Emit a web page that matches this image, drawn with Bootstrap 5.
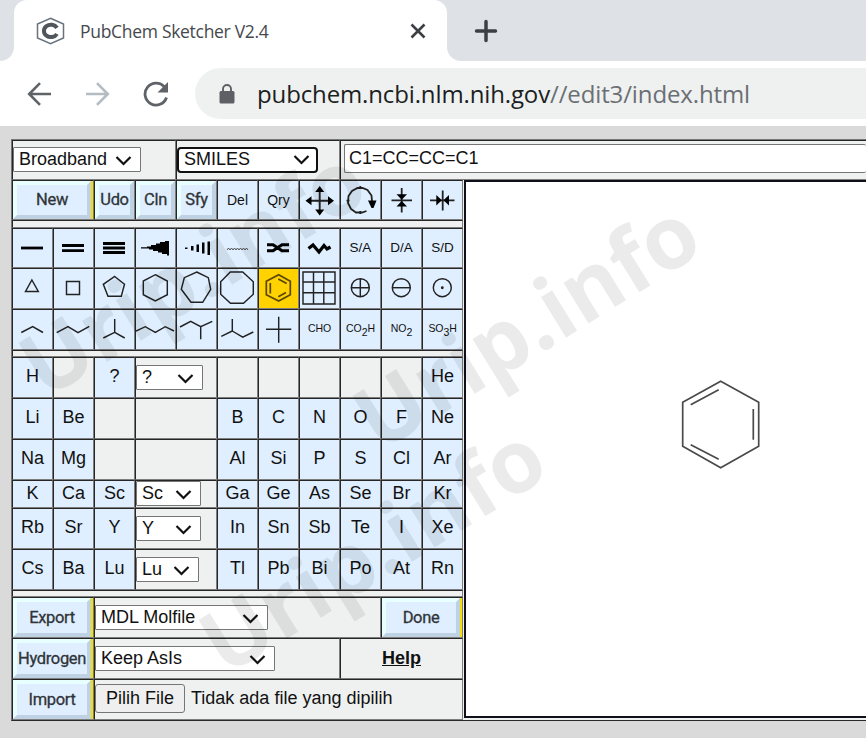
<!DOCTYPE html>
<html lang="en">
<head>
<meta charset="utf-8">
<title>PubChem Sketcher V2.4</title>
<link href="https://cdn.jsdelivr.net/npm/bootstrap@5.3.0/dist/css/bootstrap.min.css" rel="stylesheet">
<style>
body{width:866px;height:738px;background:#dadada;font-family:"Liberation Sans",Arial,sans-serif;font-size:18px;line-height:1.15;color:#111}
.tabstrip{height:61px;background:#fff}
.strip-l{width:14px;background:#dee1e6;border-bottom-right-radius:14px}
.strip-r{background:#dee1e6;border-bottom-left-radius:14px;padding-left:27px}
.tab-back{width:433px;background:#dee1e6}
.tab-face{background:#fff;border-radius:13px 13px 0 0;padding:0 20px 0 22px}
.tab-title{font-family:"Open Sans","Noto Sans",sans-serif;font-size:17.5px;letter-spacing:-.3px;color:#45494d;margin:2px 0 0 15px;white-space:nowrap}
.toolbar{height:65px;background:#fff;padding:7px 0 7px 27px}
.omni{height:51px;margin-left:26px;background:#eff1f1;border-radius:26px 0 0 26px;padding-left:24px;font-family:"Open Sans","Noto Sans",sans-serif;font-size:24px;letter-spacing:-.13px;color:#6b6f73;white-space:nowrap}
.omni b{font-weight:400;color:#1c1f22}
.lock{margin-right:22px}
.fwd{margin:0 25px 0 24px}
.sketch{margin:13px 0 0 11px;width:855px;display:grid;grid-template-columns:repeat(11,41px) 1fr;grid-template-rows:40px 40px 8px 40px 41px 41px 7px 41px 41px 41px 28px 41px 41px 7px 41px 41px 41px;border-left:1px solid #777;border-top:1px solid #777;border-bottom:1px solid #2a2a2a;background:#eff1f1}
.sketch>*{min-width:0;overflow:hidden;border:solid;border-width:1px;border-color:#262626 #7d7d7d #7d7d7d #262626}
.sketch>i,.sketch>a,.sketch>.bv{background:#dfefff;display:flex;align-items:center;justify-content:center;font-style:normal;text-decoration:none;color:#111}
.sketch>i,.sketch>u{padding-bottom:2px}
.sketch>.t13,.sketch>.t14{padding-bottom:0}
.sketch>a{padding:0}
.sketch>a svg{width:39px;height:39px;fill:none;stroke:#222;stroke-width:1.45;flex:none}
.sketch>.hot{background:#ffd200}
.sketch>.hot svg{stroke:#5a4800;stroke-width:1.7}
.s2{grid-column:span 2}.s3{grid-column:span 3}.s4{grid-column:span 4}.s6{grid-column:span 6}.s7{grid-column:span 7}.s9{grid-column:span 9}.s11{grid-column:span 11}
.sketch>.board{grid-column:12;grid-row:2/-1;background:#eff1f1;border:0;padding:0 0 1px 1px}
.board>div{background:#fff;border:2px solid #101018;border-right:0;height:538px}
.t13{font-size:13.5px}.t14{font-size:14px}.t10{font-size:10.5px;letter-spacing:-.1px}
.t10 sub{font-size:10.5px;bottom:-.3em}
.sketch>.bv{padding:0;align-items:stretch;justify-content:stretch}
.face{flex:1;display:flex;align-items:center;justify-content:center;border:4px solid;border-color:#e8ffff #bfd2e4 #bfd2e4 #e8ffff;padding-top:1px;font-family:Roboto,"Liberation Sans",sans-serif;font-size:16.5px;font-weight:400;letter-spacing:-.35px;color:#303438;-webkit-text-stroke:.3px #303438;white-space:nowrap}
.yl{border-right:2px solid #f6e000}
.pick{background:#fff;border:1px solid #767676;border-radius:1px;height:25px;padding:0 8px 0 5px;display:flex;align-items:center;justify-content:space-between}
.pick svg{width:17px;height:11px;fill:none;stroke:#111;stroke-width:2.2;margin-top:1px}
.pick.on{border:2px solid #101010;border-radius:4px;height:26px;padding-right:6px;padding-bottom:2px}
.drop{margin-top:7px}.drop-top{margin-top:6px}
.field{margin:3px 0 0 3px;height:29px;background:#fff;border:1px solid #767676;border-right:0;border-radius:2px;padding:3px 4px}
.w1{width:128px}.w2{width:141px}.w3{width:67px}.w4{width:65px}.w5{width:63px}.w6{width:173px}.w7{width:180px}
.filebtn{width:90px;height:29px;background:#efefef;border:1px solid #767676;border-radius:3px}
.filebar{padding-bottom:3px}
.filename{margin-left:6px}
.wm{left:0;top:0;width:866px;height:738px;pointer-events:none}
</style>
<script src="https://cdn.jsdelivr.net/npm/bootstrap@5.3.0/dist/js/bootstrap.bundle.min.js"></script>
</head>
<body class="position-relative overflow-hidden m-0">
<svg class="d-none"><symbol id="chev" viewBox="0 0 17 11"><path d="M1.500 2l7 7 7-7"/></symbol></svg>
<header>
<div class="tabstrip d-flex">
<div class="strip-l"></div>
<div class="tab-back d-flex"><div class="tab-face flex-fill d-flex align-items-center">
<svg width="29" height="28" viewBox="0 0 29 28" fill="none"><path d="M14.500 1.200L27.500 7v14l-13 5.800L1.500 21V7z" stroke="#68737e" stroke-width="1.500"/><path d="M21 10.800A7 6.200 0 1 0 21 17" stroke="#50565c" stroke-width="4"/></svg>
<span class="tab-title">PubChem Sketcher V2.4</span>
<svg class="ms-auto" width="18" height="18" viewBox="0 0 18 18"><path d="M2.500 2.500l13 13M15.500 2.500l-13 13" stroke="#3c4043" stroke-width="2.600"/></svg>
</div></div>
<div class="strip-r flex-fill d-flex align-items-center"><svg width="24" height="24" viewBox="0 0 24 24"><path d="M12 2.500v19M2.500 12h19" stroke="#3c4043" stroke-width="3.500" stroke-linecap="round"/></svg></div>
</div>
<div class="toolbar d-flex align-items-center">
<svg width="25" height="24" viewBox="0 0 25 24" fill="none" stroke="#5f6368" stroke-width="2.600"><path d="M24 12H2.500M13 1.200L2.200 12 13 22.800"/></svg>
<svg class="fwd" width="42" height="24" viewBox="-10 0 42 24" fill="none" stroke="#b4bcc3" stroke-width="2.600"><path d="M0 12h21.500M11 1.200L21.800 12 11 22.800"/></svg>
<svg width="26" height="26" viewBox="0 0 26 26" fill="none"><path d="M21.500 6A11 11 0 1 0 23.500 16.500" stroke="#5f6368" stroke-width="2.800"/><path d="M25 1v10.500H14.500z" fill="#5f6368"/></svg>
<div class="omni flex-fill d-flex align-items-center"><svg class="lock" width="16" height="20" viewBox="0 0 16 20"><rect x=".5" y="7" width="15" height="12.500" rx="1.500" fill="#5f6065"/><path d="M4 8V5a4 4 0 0 1 8 0v3" fill="none" stroke="#5f6065" stroke-width="1.900"/></svg><span><b>pubchem.ncbi.nlm.nih.gov</b>//edit3/index.html</span></div>
</div>
</header>

<main class="sketch">
<div class="s4"><div class="pick w1 drop-top"><span>Broadband</span><svg><use href="#chev"/></svg></div></div>
<div class="s4"><div class="pick on w2 drop-top"><span>SMILES</span><svg><use href="#chev"/></svg></div></div>
<div class="s4 border-end-0"><div class="field">C1=CC=CC=C1</div></div>
<div class="board"><div><svg class="d-block" width="399" height="534" viewBox="466 182 399 534" fill="none" stroke="#4a4a4c" stroke-width="1.700"><path d="M720.700 381.300l38 21v44l-38 21.400-38-21.400v-44zM690.700 404.700l28-15M753.300 409v30.700M690.700 444.700l28 14.600"/></svg></div></div>

<div class="bv s2"><span class="face">New</span><span class="yl"></span></div>
<div class="bv"><span class="face">Udo</span></div><div class="bv"><span class="face">Cln</span></div><div class="bv"><span class="face">Sfy</span></div>
<i class="t14">Del</i><i class="t14">Qry</i>
<a><svg><path d="M19.700 8v24M8 19.700h24" stroke-width="1.900"/><path d="M19.700 5l4.500 6h-9zM19.700 34.500l4.500-6h-9zM5.500 19.700l6-4.500v9zM34 19.700l-6-4.500v9z" fill="#000" stroke="none"/></svg></a>
<a><svg><path d="M31 20l-.5-5.500-4-5.500-5-2h-5L11 10l-3.500 5-.5 7 3 6 5 3.500h6l4.500-1.500M19.300 5v3M5.500 19.700h3M19.300 30v3" stroke-width="1.800"/><path d="M27 19.500h8.500l-3 7.500h-2z" fill="#000" stroke="none"/></svg></a>
<a><svg><path d="M19.700 7v24.500M9.500 19.300h20.500" stroke-width="1.800"/><path d="M14.500 13.200h10.500l-5.300 5.500zM14.500 25.500h10.500l-5.300-5.500z" fill="#000" stroke="none"/></svg></a>
<a><svg><path d="M7 19.300h24.500M19.700 9.500v20" stroke-width="1.800"/><path d="M13.300 14v10.500l5.500-5.200zM26 14v10.500l-5.500-5.200z" fill="#000" stroke="none"/></svg></a>
<div class="s11"></div>

<a><svg><path d="M8 19h22" stroke="#000" stroke-width="2.800"/></svg></a>
<a><svg><path d="M8 16.500h22M8 21.700h22" stroke="#000" stroke-width="2.800"/></svg></a>
<a><svg><path d="M8 14.500h22M8 19h22M8 23.500h22" stroke="#000" stroke-width="3"/></svg></a>
<a><svg><path d="M5 18.300h6v-.8h4V16h5v-1.500h4V13h5v-1h4v14.500h-2V25h-5v-1.500h-4V22h-5v-1.500h-4v-1H5z" fill="#000" stroke="none"/></svg></a>
<a><svg><path d="M8 18.500h2.500v1.500H8zM14 17h2.500v4.500H14zM19.500 15.500H22V23h-2.500zM25 13.500h2.500v11H25zM30.500 12.500H33V26h-2.500z" fill="#000" stroke="none"/></svg></a>
<a><svg><path d="M9 21l1.500-2 1.500 2 1.500-2 1.500 2 1.500-2 1.500 2 1.500-2 1.500 2 1.500-2 1.500 2 1.500-2 1.500 2 1.500-2 1.500 2" stroke="#444" stroke-width=".9"/></svg></a>
<a><svg><path d="M8 15.800h6l9 6h7M8 21.800h6l9-6h7" stroke="#000" stroke-width="3"/></svg></a>
<a><svg><path d="M8.500 19.500l4.500-3.500 6 7 5-6.500 3 3.500 3.500-2" stroke="#000" stroke-width="3.200"/></svg></a>
<i class="t13">S/A</i><i class="t13">D/A</i><i class="t13">S/D</i>

<a><svg><path d="M18.900 11l6.400 11.500H12.500z"/></svg></a>
<a><svg><path d="M12.500 12.500h13v13h-13z"/></svg></a>
<a><svg><path d="M19.700 7.500l9.800 7.800-3.200 12H13l-4.700-12z"/></svg></a>
<a><svg><path d="M19.300 5.700l12 6.300v13.700l-12 6.300-12-6.300V12z"/></svg></a>
<a><svg><path d="M19.700 3l11.600 5.700 2.400 11.600-8 13H14l-9.700-13 3-11.600z"/></svg></a>
<a><svg><path d="M12.300 3h12.400l10.600 9.700v12.600l-9.800 9H12.500l-9.800-9V12.700z"/></svg></a>
<a class="hot"><svg><path d="M19.700 5.700l11.600 6.600v13.400L19.700 32 7.300 25.700V12.300zM11.300 14v10.500M19.300 10l8.400 4.500M19.300 27.700l7.700-4.200"/></svg></a>
<a><svg><path d="M3 3h32v32H3zM13.500 3v32M23.800 3v32M3 13h32M3 23.700h32"/></svg></a>
<a><svg><circle cx="19.300" cy="18.700" r="9"/><path d="M10.300 18.700h18M19.300 9.700v18"/></svg></a>
<a><svg><circle cx="19.300" cy="18.700" r="9"/><path d="M10.300 18.700h18"/></svg></a>
<a><svg><circle cx="19.300" cy="18.700" r="9"/><circle cx="19.300" cy="18.700" r=".7" fill="#111"/></svg></a>

<a><svg><path d="M8.300 22.500l11.400-6L30 22.500"/></svg></a>
<a><svg><path d="M2.700 22.700l11.300-6 10 6 11.300-6.400"/></svg></a>
<a><svg><path d="M19.700 9v13.300L8.300 28M19.700 22.300l10 5.700"/></svg></a>
<a><svg><path d="M0 21l9.300-4.300 10 5.600 10-5.600L38 21"/></svg></a>
<a><svg><path d="M3 17l10.700-5.700 10 5.400 11.600-5.400M23.700 16.700v12.600"/></svg></a>
<a><svg><path d="M3.300 26.300L14.300 21V9M14.300 21l10.400 6.200L35.300 22"/></svg></a>
<a><svg><path d="M7 19.300h25.300M19.700 6.700v26"/></svg></a>
<i class="t10">CHO</i><i class="t10"><span>CO<sub>2</sub>H</span></i><i class="t10"><span>NO<sub>2</sub></span></i><i class="t10"><span>SO<sub>3</sub>H</span></i>
<div class="s11"></div>

<i>H</i><u></u><i>?</i><div class="s2"><div class="pick w3 drop"><span>?</span><svg><use href="#chev"/></svg></div></div><u></u><u></u><u></u><u></u><u></u><i>He</i>
<i>Li</i><i>Be</i><u></u><u class="s2"></u><i>B</i><i>C</i><i>N</i><i>O</i><i>F</i><i>Ne</i>
<i>Na</i><i>Mg</i><u></u><u class="s2"></u><i>Al</i><i>Si</i><i>P</i><i>S</i><i>Cl</i><i>Ar</i>
<i>K</i><i>Ca</i><i>Sc</i><div class="s2"><div class="pick w4"><span>Sc</span><svg><use href="#chev"/></svg></div></div><i>Ga</i><i>Ge</i><i>As</i><i>Se</i><i>Br</i><i>Kr</i>
<i>Rb</i><i>Sr</i><i>Y</i><div class="s2"><div class="pick w4 drop"><span>Y</span><svg><use href="#chev"/></svg></div></div><i>In</i><i>Sn</i><i>Sb</i><i>Te</i><i>I</i><i>Xe</i>
<i>Cs</i><i>Ba</i><i>Lu</i><div class="s2"><div class="pick w5 drop"><span>Lu</span><svg><use href="#chev"/></svg></div></div><i>Tl</i><i>Pb</i><i>Bi</i><i>Po</i><i>At</i><i>Rn</i>
<div class="s11"></div>

<div class="bv s2"><span class="face">Export</span><span class="yl"></span></div>
<div class="s7"><div class="pick w6 drop"><span>MDL Molfile</span><svg><use href="#chev"/></svg></div></div>
<div class="bv s2"><span class="face">Done</span><span class="yl"></span></div>
<div class="bv s2"><span class="face">Hydrogen</span><span class="yl"></span></div>
<div class="s6"><div class="pick w7 drop"><span>Keep AsIs</span><svg><use href="#chev"/></svg></div></div>
<div class="s3 d-flex align-items-center justify-content-center fw-bold text-decoration-underline pb-1"><span class="pt-1">Help</span></div>
<div class="bv s2"><span class="face">Import</span><span class="yl"></span></div>
<div class="s9 d-flex align-items-center filebar"><div class="filebtn d-flex align-items-center justify-content-center">Pilih File</div><span class="filename">Tidak ada file yang dipilih</span></div>
</main>

<svg class="wm position-absolute" viewBox="0 0 866 738" font-family="Open Sans, Noto Sans, sans-serif" font-weight="700" font-size="87.500" fill="#000" fill-opacity=".08">
<text transform="translate(45 400) rotate(-31.700)">Urip.info</text>
<text transform="translate(379 453) rotate(-31.700)">Urip.info</text>
<text transform="translate(225 677) rotate(-31.700)">Urip.info</text>
</svg>
</body>
</html>
